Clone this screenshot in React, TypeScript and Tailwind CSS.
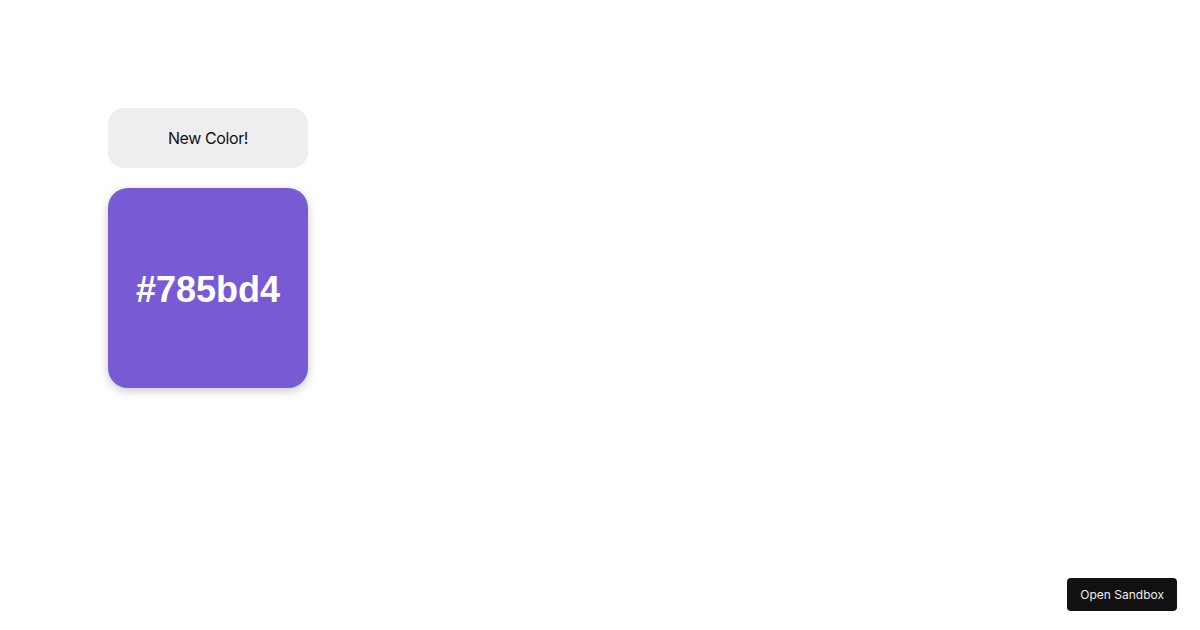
import React, { useState } from 'react';

const randomHex = () =>
  '#' +
  Math.floor(Math.random() * 0xffffff)
    .toString(16)
    .padStart(6, '0');

const App: React.FC = () => {
  const [color, setColor] = useState<string>('#785bd4');

  return (
    <div className="min-h-screen bg-white font-['Inter',sans-serif]">
      <div className="flex flex-col gap-5 pt-[108px] pl-[108px]">
        <button
          onClick={() => setColor(randomHex())}
          className="w-[200px] h-[60px] rounded-2xl bg-[#eeeeee] text-base text-[#111] tracking-tight"
        >
          New Color!
        </button>
        <div
          className="w-[200px] h-[200px] rounded-[20px] flex items-center justify-center shadow-[0_3px_10px_rgba(0,0,0,0.22)]"
          style={{ backgroundColor: color }}
        >
          <span className="mt-[3px] text-white text-[36px] font-bold font-['Liberation_Sans',Arial,sans-serif]">
            {color}
          </span>
        </div>
      </div>

      <a className="fixed right-[23px] bottom-[19px] h-[33px] px-[13px] flex items-center rounded bg-[#111] text-[12px] text-[#eee] font-['Inter',sans-serif]">
        Open Sandbox
      </a>
    </div>
  );
};

export default App;
